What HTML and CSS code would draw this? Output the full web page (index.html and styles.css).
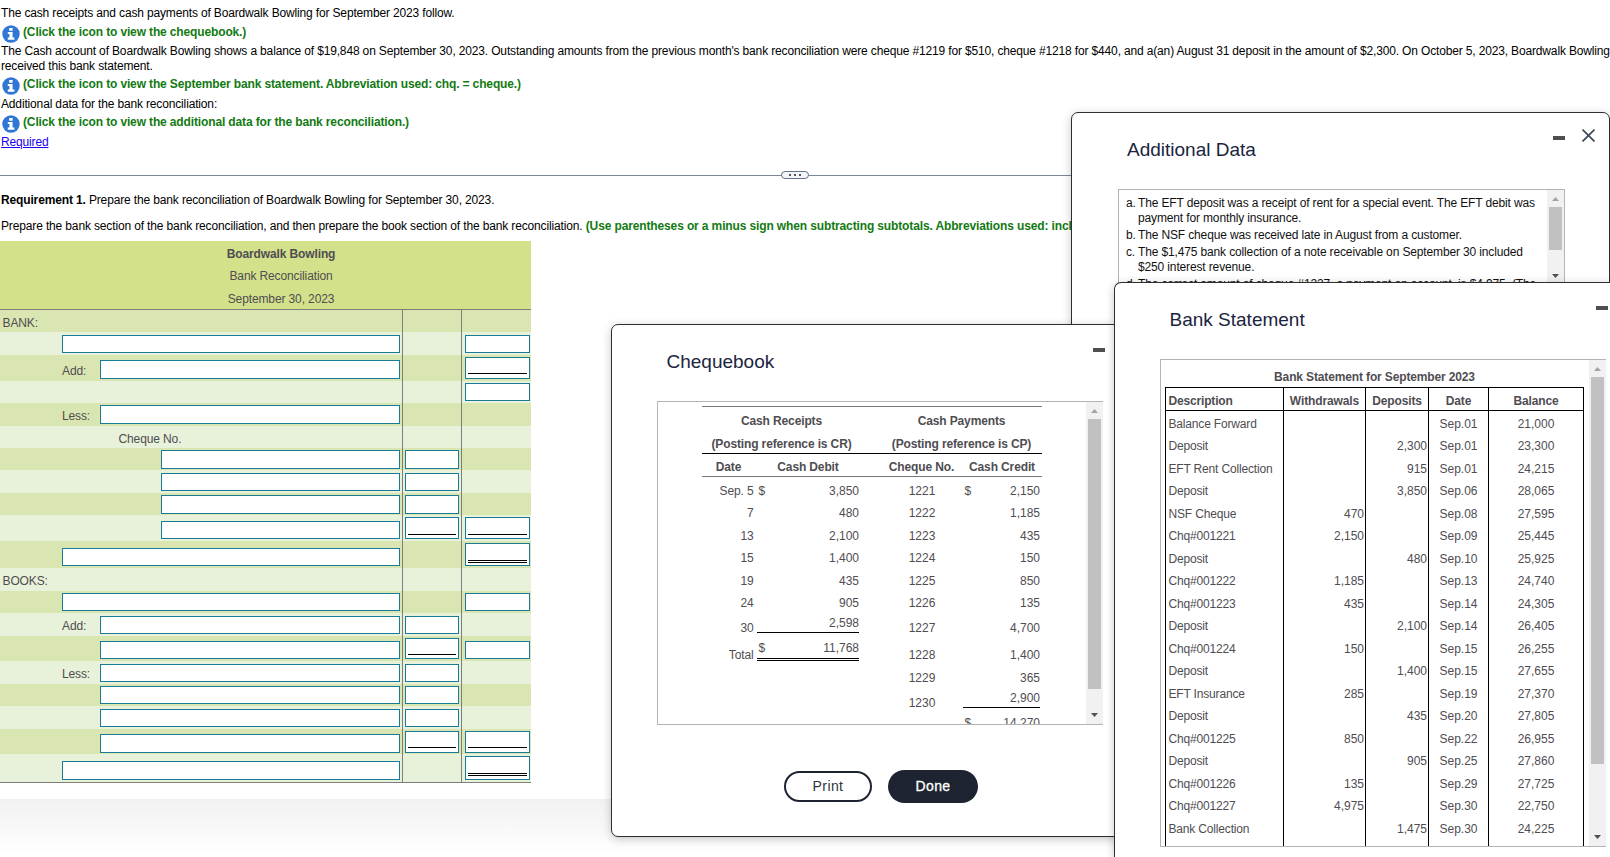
FILE: index.html
```html
<!DOCTYPE html>
<html lang="en">
<head>
<meta charset="utf-8">
<title>Bank Reconciliation</title>
<link rel="stylesheet" href="styles.css">
</head>
<body>
<svg class="defs" width="0" height="0" aria-hidden="true">
  <symbol id="info" viewBox="0 0 18 18"><circle cx="9" cy="9" r="8.7" fill="#2f76d6"/><path fill="#fff" d="M7.2 3h3.4v2.8H7.2zM5.8 7h4.8v5.6h1.8v2.2H5.8v-2.2h1.6V9H5.8z"/></symbol>
  <symbol id="up" viewBox="0 0 7 4"><path fill="#a3a3a3" d="M3.5 0L7 4H0z"/></symbol>
  <symbol id="down" viewBox="0 0 7 4"><path fill="#505050" d="M0 0h7L3.5 4z"/></symbol>
</svg>
<main class="page">
  <section class="problem">
    <p class="line">The cash receipts and cash payments of Boardwalk Bowling for September 2023 follow.</p>
    <p class="hint"><svg class="info"><use href="#info"/></svg><b>(Click the icon to view the chequebook.)</b></p>
    <p class="line">The Cash account of Boardwalk Bowling shows a balance of $19,848 on September 30, 2023. Outstanding amounts from the previous month's bank reconciliation were cheque #1219 for $510, cheque #1218 for $440, and a(an) August 31 deposit in the amount of $2,300. On October 5, 2023, Boardwalk Bowling<br>received this bank statement.</p>
    <p class="hint tall"><svg class="info"><use href="#info"/></svg><b>(Click the icon to view the September bank statement. Abbreviation used: chq. = cheque.)</b></p>
    <p class="line">Additional data for the bank reconciliation:</p>
    <p class="hint tall"><svg class="info"><use href="#info"/></svg><b>(Click the icon to view the additional data for the bank reconciliation.)</b></p>
    <p class="line req"><a href="#">Required</a></p>
  </section>
  <div class="divider"><span class="grip"><i></i><i></i><i></i></span></div>
  <section class="task">
    <p class="line"><b>Requirement 1.</b> Prepare the bank reconciliation of Boardwalk Bowling for September 30, 2023.</p>
    <p class="line second">Prepare the bank section of the bank reconciliation, and then prepare the book section of the bank reconciliation. <b class="green">(Use parentheses or a minus sign when subtracting subtotals. Abbreviations used: incl</b></p>
  </section>

  <section class="recon">
    <header><b>Boardwalk Bowling</b><span>Bank Reconciliation</span><span>September 30, 2023</span></header>
    <div class="r h22"><div class="a p1"><span class="sec">BANK:</span></div><div class="b"></div><div class="c"></div></div>
    <div class="r h23"><div class="a i1"><u class="f"></u></div><div class="b"></div><div class="c"><u class="f"></u></div></div>
    <div class="r h26"><div class="a i1"><span class="lab">Add:</span><u class="f f19"></u></div><div class="b"></div><div class="c"><u class="f f22 g4"><s></s></u></div></div>
    <div class="r h22"><div class="a"></div><div class="b"></div><div class="c"><u class="f"></u></div></div>
    <div class="r h23"><div class="a i1"><span class="lab">Less:</span><u class="f f19"></u></div><div class="b"></div><div class="c"></div></div>
    <div class="r h22"><div class="a i2 p1"><span>Cheque No.</span></div><div class="b"></div><div class="c"></div></div>
    <div class="r h22"><div class="a i3 p1"><u class="f f19"></u></div><div class="b p1"><u class="f f19"></u></div><div class="c"></div></div>
    <div class="r h23"><div class="a i3"><u class="f"></u></div><div class="b"><u class="f"></u></div><div class="c"></div></div>
    <div class="r h22"><div class="a i3 p1"><u class="f f19"></u></div><div class="b p1"><u class="f f19"></u></div><div class="c"></div></div>
    <div class="r h26"><div class="a i3"><u class="f"></u></div><div class="b"><u class="f f22"><s></s></u></div><div class="c"><u class="f f22"><s></s></u></div></div>
    <div class="r h27"><div class="a i1"><u class="f"></u></div><div class="b"></div><div class="c"><u class="f f23 g2"><s class="dbl"></s></u></div></div>
    <div class="r h23"><div class="a"><span class="sec">BOOKS:</span></div><div class="b"></div><div class="c"></div></div>
    <div class="r h22"><div class="a i1"><u class="f"></u></div><div class="b"></div><div class="c"><u class="f"></u></div></div>
    <div class="r h23"><div class="a i1"><span class="lab">Add:</span><u class="f"></u></div><div class="b"><u class="f"></u></div><div class="c"></div></div>
    <div class="r h25"><div class="a i1"><span class="lab"></span><u class="f"></u></div><div class="b"><u class="f f21"><s></s></u></div><div class="c"><u class="f"></u></div></div>
    <div class="r h23"><div class="a i1"><span class="lab">Less:</span><u class="f"></u></div><div class="b"><u class="f"></u></div><div class="c"></div></div>
    <div class="r h22"><div class="a i1"><span class="lab"></span><u class="f"></u></div><div class="b"><u class="f"></u></div><div class="c"></div></div>
    <div class="r h23"><div class="a i1"><span class="lab"></span><u class="f"></u></div><div class="b"><u class="f"></u></div><div class="c"></div></div>
    <div class="r h25"><div class="a i1 p1"><span class="lab"></span><u class="f f19"></u></div><div class="b p1"><u class="f f22 g4"><s></s></u></div><div class="c p1"><u class="f f22 g4"><s></s></u></div></div>
    <div class="r h28"><div class="a i1"><u class="f f19"></u></div><div class="b"></div><div class="c"><u class="f f24"><s class="dbl"></s></u></div></div>
  </section>
  <div class="footer-shade"></div>
</main>

<section class="dialog additional">
  <div class="bar"><h2>Additional Data</h2><svg class="min" viewBox="0 0 12 4"><path fill="#4f4f52" d="M0 0h12v4H0z"/></svg><svg class="close" viewBox="0 0 12 12"><path d="M.5.5l11 11M11.5.5l-11 11" stroke="#3b4657" stroke-width="1.5" fill="none"/></svg></div>
  <div class="box">
    <ol class="notes">
      <li><span>a.</span><span>The EFT deposit was a receipt of rent for a special event. The EFT debit was<br>payment for monthly insurance.</span></li>
      <li><span>b.</span><span>The NSF cheque was received late in August from a customer.</span></li>
      <li><span>c.</span><span>The $1,475 bank collection of a note receivable on September 30 included<br>$250 interest revenue.</span></li>
      <li><span>d.</span><span>The correct amount of cheque #1227, a payment on account, is $4,975. (The</span></li>
    </ol>
    <div class="scroll"><svg class="arrow"><use href="#up"/></svg><i class="thumb"></i><svg class="arrow dn"><use href="#down"/></svg></div>
  </div>
</section>

<section class="dialog cheque">
  <div class="bar"><h2>Chequebook</h2><svg class="min" viewBox="0 0 12 4"><path fill="#4f4f52" d="M0 0h12v4H0z"/></svg></div>
  <div class="box">
    <div class="book">
      <div class="q head t1"><b class="s2">Cash Receipts</b><b></b><b class="s2">Cash Payments</b></div>
      <div class="q head t2"><b class="s2">(Posting reference is CR)</b><b></b><b class="s2">(Posting reference is CP)</b></div>
      <div class="q head t3"><b>Date</b><b>Cash Debit</b><b></b><b>Cheque No.</b><b>Cash Credit</b></div>
      <div class="q k24"><span class="d">Sep. 5</span><span class="m"><em>$</em><em>3,850</em></span><span></span><span class="n">1221</span><span class="m"><em>$</em><em>2,150</em></span></div>
      <div class="q k22"><span class="d">7</span><span class="m">480</span><span></span><span class="n">1222</span><span class="m">1,185</span></div>
      <div class="q k23"><span class="d">13</span><span class="m">2,100</span><span></span><span class="n">1223</span><span class="m">435</span></div>
      <div class="q k22"><span class="d">15</span><span class="m">1,400</span><span></span><span class="n">1224</span><span class="m">150</span></div>
      <div class="q k23"><span class="d">19</span><span class="m">435</span><span></span><span class="n">1225</span><span class="m">850</span></div>
      <div class="q k22"><span class="d">24</span><span class="m">905</span><span></span><span class="n">1226</span><span class="m">135</span></div>
      <div class="q k25"><span class="d">30</span><span class="m one">2,598</span><span></span><span class="n">1227</span><span class="m">4,700</span></div>
      <div class="q k27"><span class="d">Total</span><span class="m two"><em>$</em><em>11,768</em></span><span></span><span class="n">1228</span><span class="m">1,400</span></div>
      <div class="q k23"><span></span><span></span><span></span><span class="n">1229</span><span class="m">365</span></div>
      <div class="q k25"><span></span><span></span><span></span><span class="n">1230</span><span class="m one">2,900</span></div>
      <div class="q k27"><span></span><span></span><span></span><span></span><span class="m two"><em>$</em><em>14,270</em></span></div>
    </div>
    <div class="scroll"><svg class="arrow"><use href="#up"/></svg><i class="thumb"></i><svg class="arrow dn"><use href="#down"/></svg></div>
  </div>
  <div class="actions"><button class="print">Print</button><button class="done">Done</button></div>
</section>

<section class="dialog bank">
  <div class="bar"><h2>Bank Statement</h2><svg class="min" viewBox="0 0 12 4"><path fill="#4f4f52" d="M0 0h12v4H0z"/></svg></div>
  <div class="box">
    <div class="stmt">
      <b class="cap">Bank Statement for September 2023</b>
      <div class="w top"><b>Description</b><b>Withdrawals</b><b>Deposits</b><b>Date</b><b>Balance</b></div>
      <div class="w"><span>Balance Forward</span><span></span><span></span><span>Sep.01</span><span>21,000</span></div>
      <div class="w"><span>Deposit</span><span></span><span>2,300</span><span>Sep.01</span><span>23,300</span></div>
      <div class="w"><span>EFT Rent Collection</span><span></span><span>915</span><span>Sep.01</span><span>24,215</span></div>
      <div class="w"><span>Deposit</span><span></span><span>3,850</span><span>Sep.06</span><span>28,065</span></div>
      <div class="w"><span>NSF Cheque</span><span>470</span><span></span><span>Sep.08</span><span>27,595</span></div>
      <div class="w"><span>Chq#001221</span><span>2,150</span><span></span><span>Sep.09</span><span>25,445</span></div>
      <div class="w"><span>Deposit</span><span></span><span>480</span><span>Sep.10</span><span>25,925</span></div>
      <div class="w"><span>Chq#001222</span><span>1,185</span><span></span><span>Sep.13</span><span>24,740</span></div>
      <div class="w"><span>Chq#001223</span><span>435</span><span></span><span>Sep.14</span><span>24,305</span></div>
      <div class="w"><span>Deposit</span><span></span><span>2,100</span><span>Sep.14</span><span>26,405</span></div>
      <div class="w"><span>Chq#001224</span><span>150</span><span></span><span>Sep.15</span><span>26,255</span></div>
      <div class="w"><span>Deposit</span><span></span><span>1,400</span><span>Sep.15</span><span>27,655</span></div>
      <div class="w"><span>EFT Insurance</span><span>285</span><span></span><span>Sep.19</span><span>27,370</span></div>
      <div class="w"><span>Deposit</span><span></span><span>435</span><span>Sep.20</span><span>27,805</span></div>
      <div class="w"><span>Chq#001225</span><span>850</span><span></span><span>Sep.22</span><span>26,955</span></div>
      <div class="w"><span>Deposit</span><span></span><span>905</span><span>Sep.25</span><span>27,860</span></div>
      <div class="w"><span>Chq#001226</span><span>135</span><span></span><span>Sep.29</span><span>27,725</span></div>
      <div class="w"><span>Chq#001227</span><span>4,975</span><span></span><span>Sep.30</span><span>22,750</span></div>
      <div class="w"><span>Bank Collection</span><span></span><span>1,475</span><span>Sep.30</span><span>24,225</span></div>
      <div class="w"><span></span><span></span><span></span><span></span><span></span></div>
    </div>
    <div class="scroll"><svg class="arrow"><use href="#up"/></svg><i class="thumb"></i><svg class="arrow dn"><use href="#down"/></svg></div>
  </div>
</section>
</body>
</html>
```
FILE: styles.css
```css
* { box-sizing: border-box; }
html, body { margin: 0; height: 857px; overflow: hidden; }
body { position: relative; background: #fff; color: #000; font: 12px/15px "Liberation Sans", Arial, sans-serif; }
.defs { display: block; position: absolute; }
p, h2, ol { margin: 0; padding: 0; }

/* problem statement */
.page { display: flex; flex-direction: column; height: 857px; overflow: hidden; }
.problem { height: 175px; padding: 6px 0 0 1px; letter-spacing: -.153px; }
.line { white-space: nowrap; }
.hint { display: flex; height: 23px; padding: 4px 0 0 .5px; color: #127a12; white-space: nowrap; }
.hint.tall { padding-top: 3px; }
.hint b { margin-left: 3.5px; letter-spacing: -.138px; }
.info { width: 18px; height: 18px; flex: none; }
.req a { color: #1a00f0; }
.divider { display: flex; justify-content: center; align-items: flex-end; height: 1px; flex: none; background: #7d8799; padding-right: 20px; }
.grip { display: flex; flex: none; justify-content: center; align-items: center; gap: 3px; width: 28px; height: 8px; margin-bottom: -3px; border: 1px solid #67748a; border-radius: 4px; background: #f3f5f8; }
.grip i { width: 2px; height: 2px; background: #555; }
.task { height: 65px; padding: 17px 0 0 1px; letter-spacing: -.142px; }
.second { margin-top: 11px; }
.green { color: #127a12; letter-spacing: -.13px; }

/* reconciliation form */
.recon { width: 531px; color: #4f4d52; border-bottom: 1px solid #7e7e7e; letter-spacing: -.12px; }
.recon header { display: flex; flex-direction: column; align-items: center; gap: 7.5px; height: 69px; padding: 5.5px 0 0 31px; background: #d4e18b; border-bottom: 1px solid #7e7e7e; }
.r { display: grid; grid-template-columns: 403px 59px 69px; background: #e8f1d9; }
.r:nth-child(even) { background: #dae6b1; }
.r > div { display: flex; align-items: flex-end; padding-bottom: 2px; line-height: 14px; }
.r > .p1 { padding-bottom: 1px; }
.r span { margin-bottom: 1px; }
.a { border-right: 1px solid #7e7e7e; padding-right: 2px; }
.b { border-right: 1px solid #7e7e7e; padding: 0 2px; }
.c { padding: 0 1px 0 3px; }
.i1 { padding-left: 62px; }
.i2 { padding-left: 118.5px; }
.i3 { padding-left: 161px; }
.sec { padding-left: 2.5px; }
.lab { width: 38px; }
.f { display: flex; align-items: flex-end; flex: 1; height: 18px; padding: 0 2px 3px; background: #fff; border: 1px solid #187c98; text-decoration: none; }
.f19 { height: 19px; } .f21 { height: 21px; } .f22 { height: 22px; } .f23 { height: 23px; } .f24 { height: 24px; }
.g4 { padding-bottom: 4px; } .g2 { padding-bottom: 2px; }
.f s { flex: 1; border-bottom: 1px solid #000; }
.f s.dbl { height: 3px; border-top: 1px solid #000; }
.h22 { height: 22px; } .h23 { height: 23px; } .h25 { height: 25px; } .h26 { height: 26px; } .h27 { height: 27px; } .h28 { height: 28px; }
.footer-shade { height: 58px; margin-top: 16px; background: linear-gradient(#f1f1f1, #fff 54px); }

/* floating windows */
.dialog { position: absolute; display: flex; flex-direction: column; width: 539px; background: #fff; border: 1px solid #2e2e2e; border-radius: 7px; box-shadow: 0 2px 10px rgba(0, 0, 0, .22); }
.additional { left: 1071px; top: 112px; height: 400px; }
.cheque { left: 611px; top: 324px; height: 513px; }
.bank { left: 1114px; top: 282px; height: 575px; border-bottom: 0; border-radius: 7px 7px 0 0; }
.bar { display: flex; align-items: flex-start; height: 76px; flex: none; padding: 23px 13px 0 55px; }
.bar h2 { width: 426px; margin-top: 3px; font-size: 19px; line-height: 22px; font-weight: 400; color: #1b2440; }
.cheque .bar, .bank .bar { padding-left: 54.5px; }
.min { width: 12px; height: 4px; flex: none; }
.close { width: 13px; height: 13px; margin: -7px 0 0 17px; flex: none; }
.box { display: flex; justify-content: space-between; width: 447px; margin-left: 45px; border: 1px solid #b4b4b4; overflow: hidden; flex: none; }
.additional .box { height: 97px; margin-left: 46px; }
.cheque .box { height: 324px; border-right: 0; width: 446px; }
.bank .box { height: 488px; border-right: 0; width: 446px; }
.scroll { display: flex; flex-direction: column; align-items: center; width: 17px; background: #f1f1f1; flex: none; }
.arrow { width: 7px; height: 4px; margin-top: 7px; flex: none; }
.thumb { width: 13px; height: 43px; margin-top: 6px; background: #c1c1c1; flex: none; }
.dn { margin: auto 0 7px; }
.cheque .thumb { height: 270px; }
.bank .thumb { height: 387px; }
.notes { list-style: none; padding: 6px 0 0 7px; color: #111; white-space: nowrap; letter-spacing: -.14px; }
.notes li { display: flex; margin-bottom: 2px; }
.notes li span:first-child { width: 12px; }
.cheque, .bank { color: #4f4d52; }

/* chequebook */
.book { width: 340px; margin: 4px 0 0 44px; line-height: 14px; }
.q { display: grid; grid-template-columns: 53px 106px 20px 81px 80px; align-items: end; padding-bottom: 3px; }
.q b { text-align: center; letter-spacing: -.13px; }
.s2 { grid-column: span 2; }
.t1 { height: 25px; border-top: 1px solid #777; }
.t2 { height: 23px; border-bottom: 1px solid #000; padding-bottom: 2px; }
.t3 { height: 23px; border-bottom: 1px solid #777; padding-bottom: 2px; }
.k22 { height: 22px; } .k23 { height: 23px; } .k24 { height: 24px; } .k25 { height: 25px; } .k27 { height: 27px; }
.q em { font-style: normal; }
.d { text-align: right; padding-right: 1.5px; letter-spacing: -.12px; }
.n { text-align: center; padding-left: 1px; }
.m { display: flex; justify-content: flex-end; margin: 0 2px 0 1px; }
.m:nth-child(2) { margin-left: 2px; }
.m:has(em) { justify-content: space-between; padding-left: 1.5px; }
.one { padding-bottom: 2px; border-bottom: 1px solid #000; margin-bottom: 2px; }
.two { padding-bottom: 3px; border-bottom: 3px double #000; margin-bottom: 1px; }
.actions { display: flex; gap: 16px; align-items: center; margin: 45px 0 0 172px; }
.actions button { font: 14px "Liberation Sans", Arial, sans-serif; letter-spacing: .4px; border-radius: 17px; padding: 0 0 1px; }
.print { width: 88px; height: 31px; border: 2px solid #1d2330; background: #fff; color: #2c3340; }
.done { width: 90px; height: 33px; border: 0; background: #1d2330; color: #fff; -webkit-text-stroke: .3px #fff; }

/* bank statement */
.stmt { display: flex; flex-direction: column; width: 419px; height: 476px; overflow: hidden; margin: 10px 0 0 4px; flex: none; }
.cap { height: 17px; text-align: center; line-height: 14px; flex: none; letter-spacing: -.14px; }
.w { display: grid; grid-template-columns: 119px 82px 63px 60px 95px; height: 22.5px; flex: none; }
.w > * { border-right: 1px solid #000; padding-top: 5.5px; text-align: center; line-height: 14px; }
.w > :first-child { border-left: 1px solid #000; padding-left: 2.5px; text-align: left; letter-spacing: -.17px; }
.w span:nth-child(2) { text-align: right; padding-right: 1px; }
.w span:nth-child(3) { text-align: right; padding-right: 1px; }
.top { height: 24px; border-top: 1px solid #000; border-bottom: 1px solid #000; letter-spacing: -.12px; }
.top > * { padding-top: 6px; }
```
